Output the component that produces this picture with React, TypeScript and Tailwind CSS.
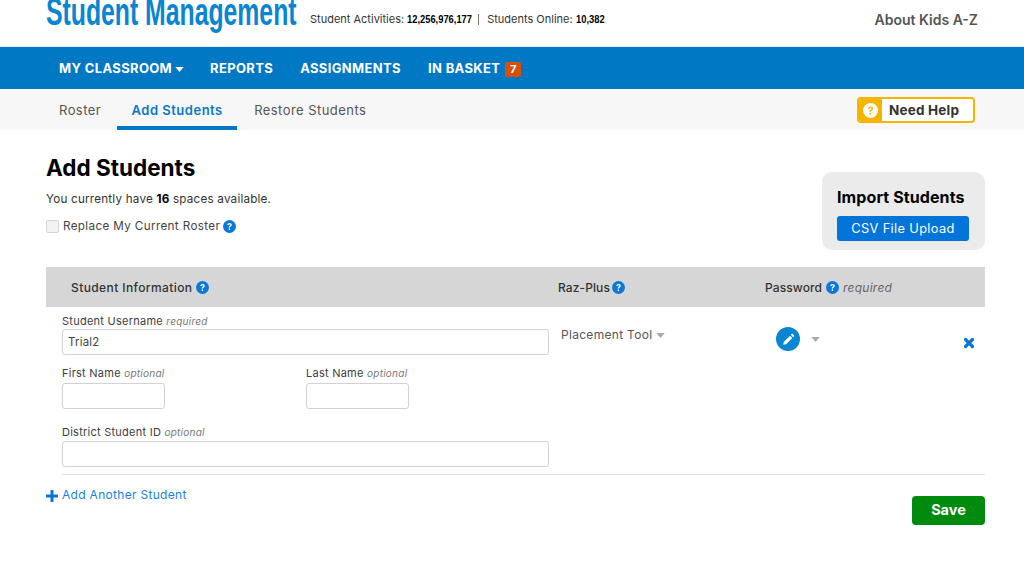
import React from "react";

const Help = ({ className = "" }: { className?: string }) => (
  <svg viewBox="0 0 16 16" className={`inline-block w-[13px] h-[13px] shrink-0 ${className}`}>
    <circle cx="8" cy="8" r="8" fill="#0b78d6" />
    <path d="M5.3 6.2C5.4 4.6 6.5 3.6 8.1 3.6c1.6 0 2.7 1 2.7 2.3 0 1.1-.6 1.7-1.4 2.2-.6.4-.8.6-.8 1.2H7c0-1.1.4-1.6 1.1-2.1.6-.4 1-.7 1-1.2 0-.5-.4-.9-1-.9-.7 0-1.1.4-1.2 1.1z" fill="#fff" />
    <rect x="7" y="10.3" width="1.7" height="1.9" rx=".4" fill="#fff" />
  </svg>
);

const Caret = ({ className = "" }: { className?: string }) => (
  <svg viewBox="0 0 10 6" className={`inline-block ${className}`}>
    <path d="M0 0h10L5 6z" fill="currentColor" />
  </svg>
);

const Label = ({ name, note }: { name: string; note: string }) => (
  <div className="text-[11px] leading-[14px] tracking-[0.25px] text-[#3d3d3d]">
    {name} <em className="text-[10px] text-[#777]">{note}</em>
  </div>
);

const Field = ({ className = "", value = "" }: { className?: string; value?: string }) => (
  <div className={`h-[26px] rounded-[3px] border border-[#d2d2d2] bg-white pl-[5px] text-[11.5px] leading-[24px] tracking-[0.2px] text-[#444] ${className}`}>
    {value}
  </div>
);

export default function App() {
  return (
    <div className="w-[1024px] h-[563px] overflow-hidden bg-white font-['Inter','Liberation_Sans',sans-serif]">
      <header className="h-[46px] overflow-hidden flex items-start pl-[46px] pr-[46px]">
        <div className="mt-[-10px] w-[251px] whitespace-nowrap">
          <div className="origin-left scale-x-[0.652] font-['Liberation_Sans',sans-serif] font-bold text-[38px] leading-[44px] text-[#0a85d1]">
            Student Management
          </div>
        </div>
        <div className="ml-[13px] mt-[12px] flex text-[11px] leading-[14px] text-[#333] whitespace-nowrap">
          <span>Student Activities:</span>
          <b className="ml-[3px] w-[66px] font-['Liberation_Sans',sans-serif] text-[11px] text-black">
            <span className="inline-block origin-left scale-x-[0.85]">12,256,976,177</span>
          </b>
          <span className="ml-[5px] mr-[8px] w-px h-[11px] mt-[2px] bg-[#777]" />
          <span>Students Online:</span>
          <b className="ml-[3px] w-[29px] font-['Liberation_Sans',sans-serif] text-[11px] text-black">
            <span className="inline-block origin-left scale-x-[0.85]">10,382</span>
          </b>
        </div>
        <div className="ml-auto mt-[11px] text-[14px] leading-[17px] font-semibold text-[#555]">About Kids A-Z</div>
      </header>

      <nav className="h-[43px] border-t border-[#dfe9f2] bg-[#0078c4] pt-[2px] flex items-center pl-[59px] text-[13px] tracking-[0.35px] font-bold text-white whitespace-nowrap">
        <span className="flex items-center">MY CLASSROOM<Caret className="ml-[3px] w-[9px] h-[5px]" /></span>
        <span className="ml-[26px]">REPORTS</span>
        <span className="ml-[27px]">ASSIGNMENTS</span>
        <span className="ml-[27px]">IN BASKET</span>
        <span className="ml-[5px] w-[16px] h-[15px] rounded-[2px] bg-[#d84f0a] text-[11px] leading-[15px] text-center">7</span>
      </nav>

      <div className="h-[40px] mt-[1px] bg-[#f7f7f7] flex items-stretch pl-[59px] pr-[49px] text-[13px] tracking-[0.45px] text-[#555] whitespace-nowrap">
        <span className="leading-[40px]">Roster</span>
        <span className="ml-[16px] w-[120px] text-center leading-[40px] font-semibold tracking-[0.5px] text-[#0a78c8] border-b-[4px] border-[#0078c4] h-[40px] box-border">Add Students</span>
        <span className="ml-[17px] leading-[40px]">Restore Students</span>
        <div className="ml-auto self-start mt-[7px] flex h-[26px] w-[118px] rounded-[4px] border-2 border-[#f4b400] bg-white overflow-hidden">
          <div className="w-[23px] bg-[#f4b400] flex items-center justify-center">
            <svg viewBox="0 0 16 16" className="w-[15px] h-[15px]">
              <circle cx="8" cy="8" r="8" fill="#fff" />
              <path d="M5.3 6.2C5.4 4.6 6.5 3.6 8.1 3.6c1.6 0 2.7 1 2.7 2.3 0 1.1-.6 1.7-1.4 2.2-.6.4-.8.6-.8 1.2H7c0-1.1.4-1.6 1.1-2.1.6-.4 1-.7 1-1.2 0-.5-.4-.9-1-.9-.7 0-1.1.4-1.2 1.1z" fill="#f4b400" />
              <rect x="7" y="10.3" width="1.7" height="1.9" rx=".4" fill="#f4b400" />
            </svg>
          </div>
          <span className="ml-[7px] text-[13.5px] leading-[22px] tracking-[0.2px] font-bold text-[#333]">Need Help</span>
        </div>
      </div>

      <main className="pl-[46px] pr-[39px]">
        <div className="flex justify-between h-[137px]">
          <div>
            <h1 className="mt-[24px] text-[22.5px] leading-[28px] font-bold text-black">Add Students</h1>
            <p className="mt-[9px] text-[11.7px] leading-[16px] tracking-[0.2px] text-[#333]">
              You currently have <b className="text-black">16</b> spaces available.
            </p>
            <label className="mt-[11px] flex items-center text-[11.7px] leading-[16px] tracking-[0.35px] text-[#444]">
              <span className="w-[13px] h-[13px] rounded-[2px] border border-[#d5d5d5] bg-[#f3f3f3]" />
              <span className="ml-[4px]">Replace My Current Roster</span>
              <Help className="ml-[3px]" />
            </label>
          </div>
          <div className="mt-[42px] w-[163px] h-[78px] rounded-[10px] bg-[#ebebeb] pl-[15px] pr-[15px]">
            <div className="pt-[15px] text-[16px] tracking-[0.1px] leading-[20px] font-bold text-black whitespace-nowrap">Import Students</div>
            <div className="mt-[9px] h-[25px] w-[132px] rounded-[3px] bg-[#0374d8] text-center text-[12.8px] leading-[25px] tracking-[0.35px] text-white">CSV File Upload</div>
          </div>
        </div>

        <div className="h-[40px] pt-[1px] bg-[#d6d6d6] flex items-center text-[12px] tracking-[0.1px] text-[#333] whitespace-nowrap">
          <div className="w-[512px] pl-[25px] flex items-center gap-[4px] font-medium tracking-[0.4px]">Student Information <Help /></div>
          <div className="w-[207px] flex items-center gap-[2px] font-medium">Raz-Plus <Help /></div>
          <div className="flex items-center gap-[4px] font-medium">Password <Help /> <em className="font-normal tracking-[0.25px] text-[#666]">required</em></div>
        </div>

        <div className="ml-[16px] flex border-b border-[#e2e2e2] h-[168px] box-border">
          <div className="w-[487px] pt-[7px]">
            <Label name="Student Username" note="required" />
            <Field className="mt-[1px]" value="Trial2" />
            <div className="mt-[11px] flex">
              <div className="w-[244px]">
                <Label name="First Name" note="optional" />
                <Field className="mt-[3px] w-[103px]" />
              </div>
              <div>
                <Label name="Last Name" note="optional" />
                <Field className="mt-[3px] w-[103px]" />
              </div>
            </div>
            <div className="mt-[16px]">
              <Label name="District Student ID" note="optional" />
              <Field className="mt-[2px]" />
            </div>
          </div>
          <div className="ml-[12px] w-[215px] pt-[20px] h-fit flex items-center text-[12px] leading-[16px] tracking-[0.3px] text-[#555]">
            Placement Tool<Caret className="ml-[4px] w-[9px] h-[5px] text-[#aaa]" />
          </div>
          <div className="pt-[20px] flex items-start h-fit">
            <div className="w-[24px] h-[24px] rounded-full bg-[#0a85d1] flex items-center justify-center">
              <svg viewBox="0 0 16 16" className="w-[13px] h-[13px]">
                <path d="M1.5 14.5l.8-3.6 7.6-7.6 2.8 2.8-7.6 7.6zM10.9 2.3l1-1c.4-.4 1-.4 1.4 0l1.4 1.4c.4.4.4 1 0 1.4l-1 1z" fill="#fff" />
              </svg>
            </div>
            <Caret className="ml-[11px] mt-[10px] w-[9px] h-[5px] text-[#aaa]" />
          </div>
          <div className="ml-auto mr-[10px] mt-[30px] h-fit">
            <svg viewBox="0 0 12 12" className="w-[12px] h-[12px] block">
              <path d="M2.5 2.5l7 7M9.5 2.5l-7 7" stroke="#0a74d6" strokeWidth="3.2" strokeLinecap="round" />
            </svg>
          </div>
        </div>

        <div className="flex justify-between items-start">
          <div className="mt-[12px] flex items-center text-[12px] leading-[16px] tracking-[0.3px] text-[#1a82dc]">
            <svg viewBox="0 0 12 12" className="w-[12px] h-[12px] mr-[4px] mt-[2px]">
              <path d="M6 1v10M1 6h10" stroke="#0a74d6" strokeWidth="3" strokeLinecap="round" />
            </svg>
            Add Another Student
          </div>
          <div className="mt-[21px] w-[73px] h-[29px] rounded-[4px] bg-[#008a0e] text-center text-[14.5px] leading-[28px] font-bold text-white">Save</div>
        </div>
      </main>
    </div>
  );
}
